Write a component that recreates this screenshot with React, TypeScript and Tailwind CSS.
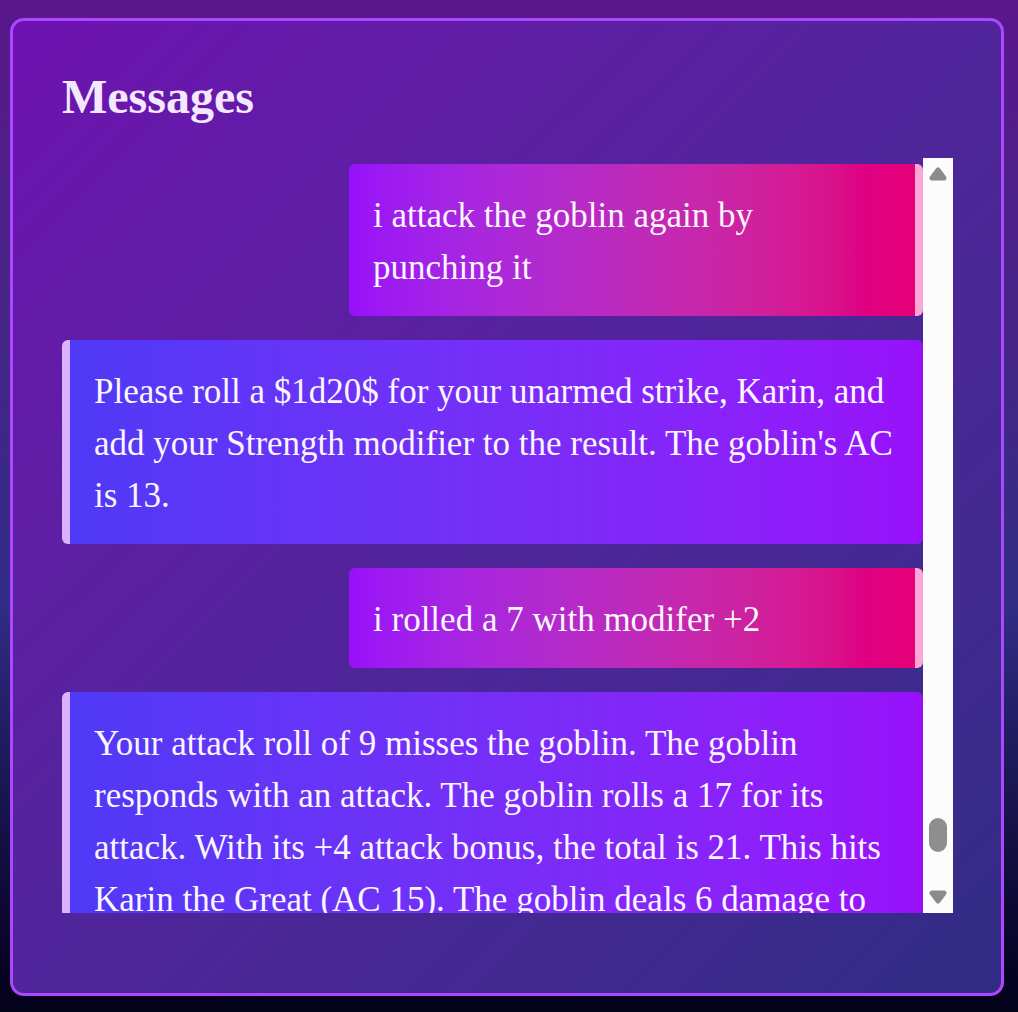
type Message = {
  from: "player" | "dm";
  text: string;
};

const MESSAGES: Message[] = [
  { from: "player", text: "i attack the goblin again by punching it" },
  {
    from: "dm",
    text: "Please roll a $1d20$ for your unarmed strike, Karin, and add your Strength modifier to the result. The goblin's AC is 13.",
  },
  { from: "player", text: "i rolled a 7 with modifer +2" },
  {
    from: "dm",
    text: "Your attack roll of 9 misses the goblin. The goblin responds with an attack. The goblin rolls a 17 for its attack. With its +4 attack bonus, the total is 21. This hits Karin the Great (AC 15). The goblin deals 6 damage to Karin. What do you do next?",
  },
];

const serif = { fontFamily: '"Liberation Serif", "DejaVu Serif", serif' };

function Burbuja({ message }: { message: Message }) {
  if (message.from === "player") {
    return (
      <div className="ml-auto w-2/3 shrink-0 rounded-md border-r-[8px] border-pink-300 bg-linear-to-r from-purple-600 to-pink-600 px-6 pb-[22px] pt-[26px] text-[35px] leading-[52px] text-purple-50">
        {message.text}
      </div>
    );
  }
  return (
    <div className="w-full shrink-0 rounded-md border-l-[8px] border-purple-300 bg-linear-to-r from-indigo-600 to-purple-600 px-6 pb-[22px] pt-[26px] text-[35px] leading-[52px] text-purple-50">
      {message.text}
    </div>
  );
}

function Flecha({ abajo }: { abajo?: boolean }) {
  return (
    <svg width="18" height="14" viewBox="0 0 18 14" className="shrink-0">
      <polygon
        points={abajo ? "3,3 15,3 9,11" : "3,11 15,11 9,3"}
        fill="#8b8b8b"
        stroke="#8b8b8b"
        strokeWidth="5"
        strokeLinejoin="round"
      />
    </svg>
  );
}

function BarraDesplazamiento() {
  return (
    <div className="flex w-[30px] shrink-0 flex-col items-center bg-[#fcfcfc] pt-[9px]">
      <Flecha />
      <div className="mt-[637px] h-[34px] w-[18px] rounded-full bg-[#8e8e8e]" />
      <div className="mt-[38px]">
        <Flecha abajo />
      </div>
    </div>
  );
}

export default function App() {
  return (
    <div className="min-h-screen bg-linear-to-b from-purple-900 via-indigo-900 via-60% to-[#04021a] pb-[16px] pl-[10px] pr-[14px] pt-[18px]">
      <div className="flex h-[978px] flex-col rounded-[14px] border-[3px] border-purple-500 bg-linear-to-br from-purple-800 to-indigo-900 pl-[49px] pr-[48px] pt-[48px]">
        <h2 className="h-[56px] text-[48px] font-bold leading-[56px] text-purple-100" style={serif}>
          Messages
        </h2>

        <div className="mt-[33px] flex h-[755px]" style={serif}>
          <div className="flex min-w-0 flex-1 flex-col gap-6 overflow-hidden pt-[6px]">
            {MESSAGES.map((message, indice) => (
              <Burbuja key={indice} message={message} />
            ))}
          </div>
          <BarraDesplazamiento />
        </div>
      </div>
    </div>
  );
}
